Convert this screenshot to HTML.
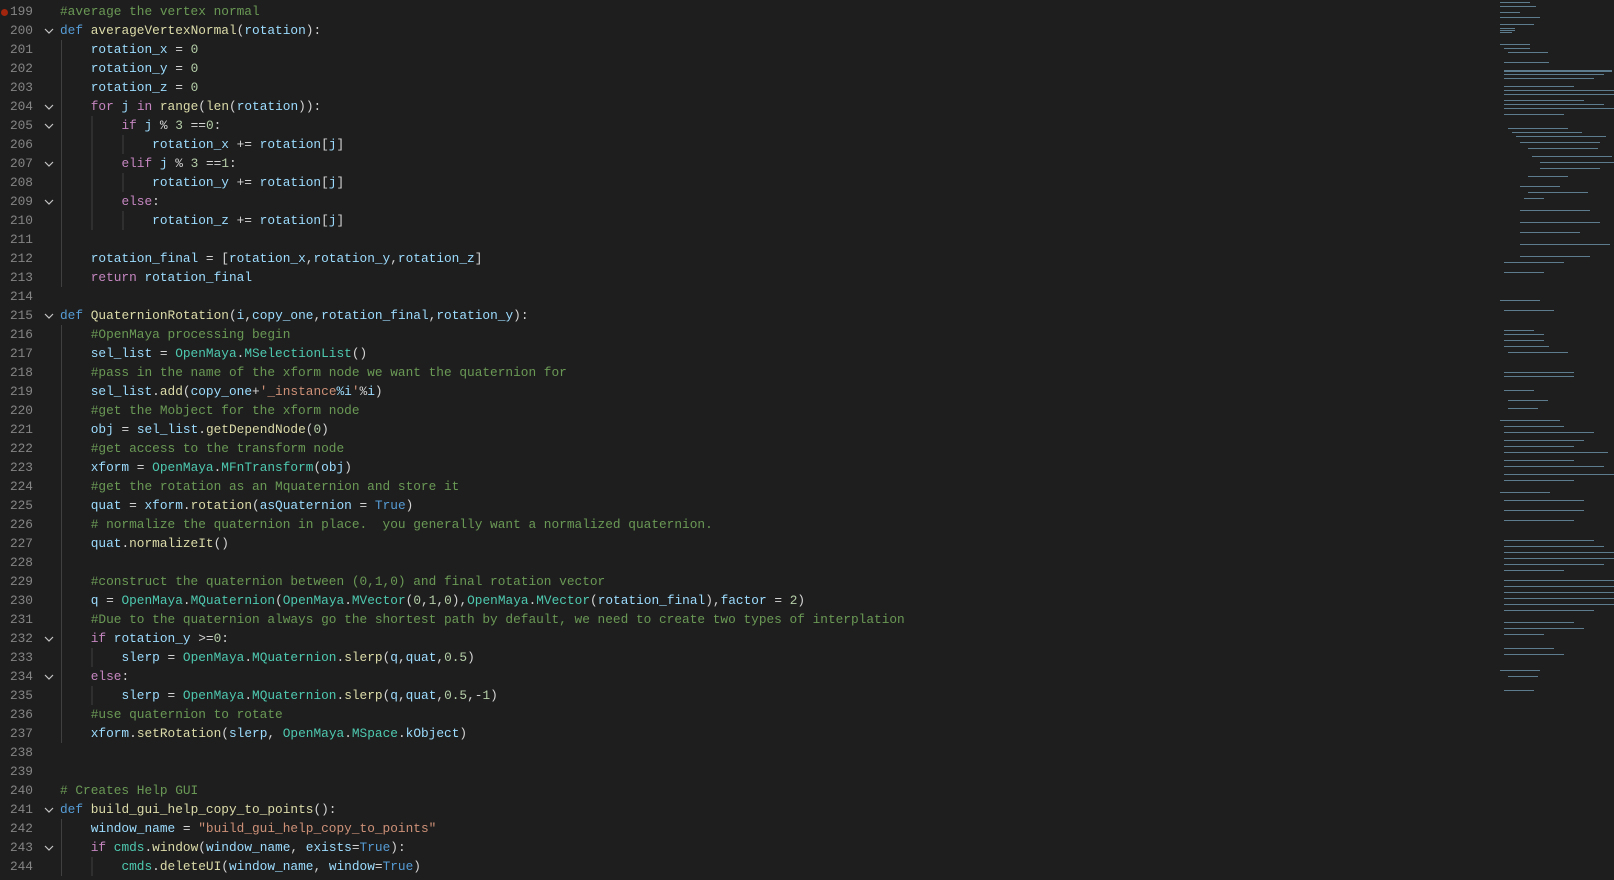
<!DOCTYPE html>
<html><head><meta charset="utf-8"><style>
html,body{margin:0;padding:0;background:#1e1e1e;width:1614px;height:880px;overflow:hidden}
body{position:relative;font-family:"Liberation Mono",monospace;font-size:12.8px;color:#d4d4d4}
#code{position:absolute;left:0;top:2px;width:1490px}
.l{position:relative;height:19px;line-height:19px;white-space:pre}
.n{position:absolute;left:0;width:33px;text-align:right;color:#858585}
.c{position:absolute;left:60px}
.g{position:absolute;left:61px;top:0;height:100%;background:repeating-linear-gradient(to right,#404040 0 1px,transparent 1px 30.7px)}
.f{position:absolute;left:44px;top:7px}
.cm{color:#6a9955}.k{color:#569cd6}.p{color:#c586c0}.v{color:#9cdcfe}.fn{color:#dcdcaa}.t{color:#4ec9b0}.nu{color:#b5cea8}.s{color:#ce9178}
.mm{position:absolute;left:1500px;top:0;width:114px;height:880px}
</style></head><body>
<div style="position:absolute;left:1px;top:9px;width:7px;height:7px;border-radius:50%;background:#a1260d"></div>
<div id="code">
<div class="l"><span class="n">199</span><span class="c"><span class="cm">#average the vertex normal</span></span></div>
<div class="l"><span class="n">200</span><svg class="f" width="10" height="7"><polyline points="1,1 5,5 9,1" fill="none" stroke="#c5c5c5" stroke-width="1.2"/></svg><span class="c"><span class="k">def</span> <span class="fn">averageVertexNormal</span>(<span class="v">rotation</span>):</span></div>
<div class="l"><span class="n">201</span><span class="g" style="width:2px"></span><span class="c">    <span class="v">rotation_x</span> = <span class="nu">0</span></span></div>
<div class="l"><span class="n">202</span><span class="g" style="width:2px"></span><span class="c">    <span class="v">rotation_y</span> = <span class="nu">0</span></span></div>
<div class="l"><span class="n">203</span><span class="g" style="width:2px"></span><span class="c">    <span class="v">rotation_z</span> = <span class="nu">0</span></span></div>
<div class="l"><span class="n">204</span><svg class="f" width="10" height="7"><polyline points="1,1 5,5 9,1" fill="none" stroke="#c5c5c5" stroke-width="1.2"/></svg><span class="g" style="width:2px"></span><span class="c">    <span class="p">for</span> <span class="v">j</span> <span class="p">in</span> <span class="fn">range</span>(<span class="fn">len</span>(<span class="v">rotation</span>)):</span></div>
<div class="l"><span class="n">205</span><svg class="f" width="10" height="7"><polyline points="1,1 5,5 9,1" fill="none" stroke="#c5c5c5" stroke-width="1.2"/></svg><span class="g" style="width:33px"></span><span class="c">        <span class="p">if</span> <span class="v">j</span> % <span class="nu">3</span> ==<span class="nu">0</span>:</span></div>
<div class="l"><span class="n">206</span><span class="g" style="width:64px"></span><span class="c">            <span class="v">rotation_x</span> += <span class="v">rotation</span>[<span class="v">j</span>]</span></div>
<div class="l"><span class="n">207</span><svg class="f" width="10" height="7"><polyline points="1,1 5,5 9,1" fill="none" stroke="#c5c5c5" stroke-width="1.2"/></svg><span class="g" style="width:33px"></span><span class="c">        <span class="p">elif</span> <span class="v">j</span> % <span class="nu">3</span> ==<span class="nu">1</span>:</span></div>
<div class="l"><span class="n">208</span><span class="g" style="width:64px"></span><span class="c">            <span class="v">rotation_y</span> += <span class="v">rotation</span>[<span class="v">j</span>]</span></div>
<div class="l"><span class="n">209</span><svg class="f" width="10" height="7"><polyline points="1,1 5,5 9,1" fill="none" stroke="#c5c5c5" stroke-width="1.2"/></svg><span class="g" style="width:33px"></span><span class="c">        <span class="p">else</span>:</span></div>
<div class="l"><span class="n">210</span><span class="g" style="width:64px"></span><span class="c">            <span class="v">rotation_z</span> += <span class="v">rotation</span>[<span class="v">j</span>]</span></div>
<div class="l"><span class="n">211</span><span class="g" style="width:2px"></span></div>
<div class="l"><span class="n">212</span><span class="g" style="width:2px"></span><span class="c">    <span class="v">rotation_final</span> = [<span class="v">rotation_x</span>,<span class="v">rotation_y</span>,<span class="v">rotation_z</span>]</span></div>
<div class="l"><span class="n">213</span><span class="g" style="width:2px"></span><span class="c">    <span class="p">return</span> <span class="v">rotation_final</span></span></div>
<div class="l"><span class="n">214</span></div>
<div class="l"><span class="n">215</span><svg class="f" width="10" height="7"><polyline points="1,1 5,5 9,1" fill="none" stroke="#c5c5c5" stroke-width="1.2"/></svg><span class="c"><span class="k">def</span> <span class="fn">QuaternionRotation</span>(<span class="v">i</span>,<span class="v">copy_one</span>,<span class="v">rotation_final</span>,<span class="v">rotation_y</span>):</span></div>
<div class="l"><span class="n">216</span><span class="g" style="width:2px"></span><span class="c">    <span class="cm">#OpenMaya processing begin</span></span></div>
<div class="l"><span class="n">217</span><span class="g" style="width:2px"></span><span class="c">    <span class="v">sel_list</span> = <span class="t">OpenMaya</span>.<span class="t">MSelectionList</span>()</span></div>
<div class="l"><span class="n">218</span><span class="g" style="width:2px"></span><span class="c">    <span class="cm">#pass in the name of the xform node we want the quaternion for</span></span></div>
<div class="l"><span class="n">219</span><span class="g" style="width:2px"></span><span class="c">    <span class="v">sel_list</span>.<span class="fn">add</span>(<span class="v">copy_one</span>+<span class="s">'_instance</span><span class="v">%i</span><span class="s">'</span>%<span class="v">i</span>)</span></div>
<div class="l"><span class="n">220</span><span class="g" style="width:2px"></span><span class="c">    <span class="cm">#get the Mobject for the xform node</span></span></div>
<div class="l"><span class="n">221</span><span class="g" style="width:2px"></span><span class="c">    <span class="v">obj</span> = <span class="v">sel_list</span>.<span class="fn">getDependNode</span>(<span class="nu">0</span>)</span></div>
<div class="l"><span class="n">222</span><span class="g" style="width:2px"></span><span class="c">    <span class="cm">#get access to the transform node</span></span></div>
<div class="l"><span class="n">223</span><span class="g" style="width:2px"></span><span class="c">    <span class="v">xform</span> = <span class="t">OpenMaya</span>.<span class="t">MFnTransform</span>(<span class="v">obj</span>)</span></div>
<div class="l"><span class="n">224</span><span class="g" style="width:2px"></span><span class="c">    <span class="cm">#get the rotation as an Mquaternion and store it</span></span></div>
<div class="l"><span class="n">225</span><span class="g" style="width:2px"></span><span class="c">    <span class="v">quat</span> = <span class="v">xform</span>.<span class="fn">rotation</span>(<span class="v">asQuaternion</span> = <span class="k">True</span>)</span></div>
<div class="l"><span class="n">226</span><span class="g" style="width:2px"></span><span class="c">    <span class="cm"># normalize the quaternion in place.  you generally want a normalized quaternion.</span></span></div>
<div class="l"><span class="n">227</span><span class="g" style="width:2px"></span><span class="c">    <span class="v">quat</span>.<span class="fn">normalizeIt</span>()</span></div>
<div class="l"><span class="n">228</span><span class="g" style="width:2px"></span></div>
<div class="l"><span class="n">229</span><span class="g" style="width:2px"></span><span class="c">    <span class="cm">#construct the quaternion between (0,1,0) and final rotation vector</span></span></div>
<div class="l"><span class="n">230</span><span class="g" style="width:2px"></span><span class="c">    <span class="v">q</span> = <span class="t">OpenMaya</span>.<span class="t">MQuaternion</span>(<span class="t">OpenMaya</span>.<span class="t">MVector</span>(<span class="nu">0</span>,<span class="nu">1</span>,<span class="nu">0</span>),<span class="t">OpenMaya</span>.<span class="t">MVector</span>(<span class="v">rotation_final</span>),<span class="v">factor</span> = <span class="nu">2</span>)</span></div>
<div class="l"><span class="n">231</span><span class="g" style="width:2px"></span><span class="c">    <span class="cm">#Due to the quaternion always go the shortest path by default, we need to create two types of interplation</span></span></div>
<div class="l"><span class="n">232</span><svg class="f" width="10" height="7"><polyline points="1,1 5,5 9,1" fill="none" stroke="#c5c5c5" stroke-width="1.2"/></svg><span class="g" style="width:2px"></span><span class="c">    <span class="p">if</span> <span class="v">rotation_y</span> &gt;=<span class="nu">0</span>:</span></div>
<div class="l"><span class="n">233</span><span class="g" style="width:33px"></span><span class="c">        <span class="v">slerp</span> = <span class="t">OpenMaya</span>.<span class="t">MQuaternion</span>.<span class="fn">slerp</span>(<span class="v">q</span>,<span class="v">quat</span>,<span class="nu">0.5</span>)</span></div>
<div class="l"><span class="n">234</span><svg class="f" width="10" height="7"><polyline points="1,1 5,5 9,1" fill="none" stroke="#c5c5c5" stroke-width="1.2"/></svg><span class="g" style="width:2px"></span><span class="c">    <span class="p">else</span>:</span></div>
<div class="l"><span class="n">235</span><span class="g" style="width:33px"></span><span class="c">        <span class="v">slerp</span> = <span class="t">OpenMaya</span>.<span class="t">MQuaternion</span>.<span class="fn">slerp</span>(<span class="v">q</span>,<span class="v">quat</span>,<span class="nu">0.5</span>,-<span class="nu">1</span>)</span></div>
<div class="l"><span class="n">236</span><span class="g" style="width:2px"></span><span class="c">    <span class="cm">#use quaternion to rotate</span></span></div>
<div class="l"><span class="n">237</span><span class="g" style="width:2px"></span><span class="c">    <span class="v">xform</span>.<span class="fn">setRotation</span>(<span class="v">slerp</span>, <span class="t">OpenMaya</span>.<span class="t">MSpace</span>.<span class="v">kObject</span>)</span></div>
<div class="l"><span class="n">238</span></div>
<div class="l"><span class="n">239</span></div>
<div class="l"><span class="n">240</span><span class="c"><span class="cm"># Creates Help GUI</span></span></div>
<div class="l"><span class="n">241</span><svg class="f" width="10" height="7"><polyline points="1,1 5,5 9,1" fill="none" stroke="#c5c5c5" stroke-width="1.2"/></svg><span class="c"><span class="k">def</span> <span class="fn">build_gui_help_copy_to_points</span>():</span></div>
<div class="l"><span class="n">242</span><span class="g" style="width:2px"></span><span class="c">    <span class="v">window_name</span> = <span class="s">"build_gui_help_copy_to_points"</span></span></div>
<div class="l"><span class="n">243</span><svg class="f" width="10" height="7"><polyline points="1,1 5,5 9,1" fill="none" stroke="#c5c5c5" stroke-width="1.2"/></svg><span class="g" style="width:2px"></span><span class="c">    <span class="p">if</span> <span class="t">cmds</span>.<span class="fn">window</span>(<span class="v">window_name</span>, <span class="v">exists</span>=<span class="k">True</span>):</span></div>
<div class="l"><span class="n">244</span><span class="g" style="width:33px"></span><span class="c">        <span class="t">cmds</span>.<span class="fn">deleteUI</span>(<span class="v">window_name</span>, <span class="v">window</span>=<span class="k">True</span>)</span></div>
</div>

<svg class="mm" width="114" height="880" opacity="0.5">
<g fill="#9cdcfe">
<rect x="0" y="2" width="30" height="1"/><rect x="0" y="6" width="36" height="1"/><rect x="0" y="12" width="20" height="1"/><rect x="0" y="17" width="40" height="1"/>
<rect x="0" y="24" width="34" height="1"/><rect x="0" y="28" width="15" height="1"/><rect x="0" y="30" width="15" height="1"/><rect x="0" y="32" width="12" height="1"/>
<rect x="0" y="44" width="30" height="1"/><rect x="4" y="48" width="26" height="1"/><rect x="8" y="52" width="40" height="1"/>
<rect x="4" y="62" width="45" height="1"/><rect x="4" y="70" width="108" height="2"/><rect x="4" y="74" width="100" height="1"/><rect x="4" y="78" width="90" height="1"/>
<rect x="4" y="86" width="70" height="1"/><rect x="4" y="90" width="113" height="1"/><rect x="4" y="94" width="110" height="1"/><rect x="4" y="100" width="80" height="1"/><rect x="4" y="104" width="100" height="1"/><rect x="4" y="108" width="113" height="1"/><rect x="4" y="114" width="60" height="1"/>
<rect x="8" y="128" width="60" height="1"/><rect x="12" y="132" width="70" height="1"/><rect x="16" y="136" width="90" height="1"/><rect x="20" y="142" width="80" height="1"/><rect x="28" y="148" width="70" height="1"/><rect x="32" y="156" width="80" height="1"/><rect x="40" y="162" width="74" height="1"/><rect x="40" y="168" width="60" height="1"/><rect x="28" y="176" width="40" height="1"/>
<rect x="20" y="186" width="40" height="1"/><rect x="28" y="192" width="60" height="1"/><rect x="24" y="198" width="20" height="1"/>
<rect x="20" y="210" width="70" height="1"/><rect x="20" y="222" width="80" height="1"/><rect x="20" y="232" width="60" height="1"/><rect x="20" y="244" width="90" height="1"/><rect x="20" y="256" width="70" height="1"/>
<rect x="4" y="262" width="60" height="1"/><rect x="4" y="272" width="40" height="1"/><rect x="0" y="300" width="40" height="1"/><rect x="4" y="310" width="50" height="1"/>
<rect x="4" y="330" width="30" height="1"/><rect x="4" y="334" width="40" height="1"/><rect x="4" y="340" width="40" height="1"/><rect x="4" y="346" width="45" height="1"/><rect x="8" y="352" width="60" height="1"/>
<rect x="4" y="372" width="70" height="1"/><rect x="4" y="376" width="70" height="1"/><rect x="4" y="390" width="30" height="1"/><rect x="8" y="400" width="40" height="1"/><rect x="8" y="408" width="30" height="1"/>
<rect x="0" y="420" width="60" height="1"/><rect x="4" y="426" width="60" height="1"/><rect x="4" y="432" width="90" height="1"/><rect x="4" y="440" width="80" height="1"/><rect x="4" y="446" width="70" height="1"/><rect x="4" y="452" width="104" height="1"/><rect x="4" y="460" width="70" height="1"/><rect x="4" y="466" width="100" height="1"/><rect x="4" y="474" width="110" height="1"/><rect x="4" y="480" width="70" height="1"/>
<rect x="0" y="492" width="50" height="1"/><rect x="4" y="500" width="80" height="1"/><rect x="4" y="510" width="80" height="1"/><rect x="4" y="520" width="70" height="1"/>
<rect x="4" y="540" width="90" height="1"/><rect x="4" y="546" width="100" height="1"/><rect x="4" y="552" width="110" height="1"/><rect x="4" y="558" width="113" height="1"/><rect x="4" y="564" width="100" height="1"/><rect x="4" y="570" width="60" height="1"/>
<rect x="4" y="580" width="110" height="1"/><rect x="4" y="586" width="113" height="1"/><rect x="4" y="592" width="113" height="1"/><rect x="4" y="598" width="110" height="1"/><rect x="4" y="604" width="113" height="1"/><rect x="4" y="610" width="90" height="1"/>
<rect x="4" y="622" width="70" height="1"/><rect x="4" y="628" width="80" height="1"/><rect x="4" y="634" width="40" height="1"/><rect x="4" y="648" width="50" height="1"/><rect x="4" y="654" width="60" height="1"/>
<rect x="0" y="670" width="40" height="1"/><rect x="8" y="676" width="30" height="1"/><rect x="4" y="690" width="30" height="1"/>
</g></svg>
</body></html>
